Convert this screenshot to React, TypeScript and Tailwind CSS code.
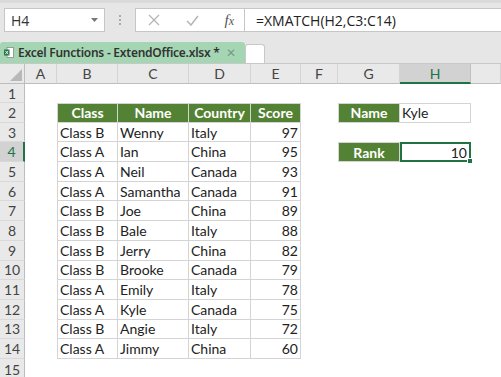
import React from "react";

const rows = [
  ["Class B", "Wenny", "Italy", 97],
  ["Class A", "Ian", "China", 95],
  ["Class A", "Neil", "Canada", 93],
  ["Class A", "Samantha", "Canada", 91],
  ["Class B", "Joe", "China", 89],
  ["Class B", "Bale", "Italy", 88],
  ["Class B", "Jerry", "China", 82],
  ["Class B", "Brooke", "Canada", 79],
  ["Class A", "Emily", "Italy", 78],
  ["Class A", "Kyle", "Canada", 75],
  ["Class B", "Angie", "Italy", 72],
  ["Class A", "Jimmy", "China", 60],
];

const cols = ["A", "B", "C", "D", "E", "F", "G", "H", ""];

function RowHead({ n, active }: { n: number; active?: boolean }) {
  return (
    <div
      className={`flex items-center justify-center border-b border-[#d9d9d9] text-[14px] ${
        active
          ? "bg-[#d2d2d2] text-[#217346] border-r-2 border-r-[#217346]"
          : "bg-[#e9e9e9] text-[#444] border-r border-r-[#bdbdbd]"
      }`}
    >
      {n}
    </div>
  );
}

function Empty({ span = 1 }: { span?: number }) {
  return <div style={{ gridColumn: `span ${span}` }} />;
}

const tCell = "flex items-center border-r border-b border-[#d4d4d4] px-[2px] text-[14px] text-[#222]";
const gCell = "flex items-center justify-center bg-[#548235] border-r border-b border-[#d4d4d4] text-[14px] font-bold text-white";

export default function App() {
  return (
    <div
      className="w-[501px] h-[377px] overflow-hidden bg-white"
      style={{ fontFamily: "Lato, 'Open Sans', sans-serif" }}
    >
      {/* formula bar */}
      <div className="h-[43px] bg-[#e6e6e6] border-t-[3px] border-[#dadada] flex items-start pt-[5px] pl-[4px]">
        <div className="w-[101px] h-[24px] bg-white border border-[#c6c6c6] flex items-center justify-between pl-[6px] pr-[6px]">
          <span className="text-[14px] text-[#333]" style={{ fontFamily: "'Open Sans', sans-serif" }}>H4</span>
          <svg width="7" height="4" viewBox="0 0 7 4"><path d="M0 0h7L3.5 4z" fill="#777" /></svg>
        </div>
        <div className="w-[30px] h-[24px] flex flex-col items-center justify-center gap-[2px]">
          <span className="w-[2px] h-[2px] bg-[#aaa]" />
          <span className="w-[2px] h-[2px] bg-[#aaa]" />
          <span className="w-[2px] h-[2px] bg-[#aaa]" />
        </div>
        <div className="w-[110px] h-[24px] bg-white border border-[#c6c6c6] flex items-center justify-between pl-[12px] pr-[10px]">
          <svg width="12" height="12" viewBox="0 0 12 12"><path d="M1 1l10 10M11 1L1 11" stroke="#b5b5b5" strokeWidth="1.3" /></svg>
          <svg width="13" height="11" viewBox="0 0 13 11"><path d="M1 6l4 4L12 1" stroke="#b5b5b5" strokeWidth="1.5" fill="none" /></svg>
          <span className="text-[15px] italic text-[#555]" style={{ fontFamily: "'Liberation Serif', serif" }}>
            f<span className="text-[12px]">x</span>
          </span>
        </div>
        <div className="flex-1 h-[24px] bg-white border-y border-[#c6c6c6] flex items-center pl-[11px]">
          <span className="text-[14px] text-[#222]" style={{ fontFamily: "'Open Sans', sans-serif" }}>=XMATCH(H2,C3:C14)</span>
        </div>
      </div>

      {/* tab row */}
      <div className="h-[21px] bg-[#e6e6e6] flex items-end border-b border-[#c8c8c8]">
        <div className="w-[245px] h-[21px] bg-[#a5d6b4] rounded-t-[3px] flex items-center pl-[4px] pr-[9px]">
          <svg width="10" height="11" viewBox="0 0 10 11" className="mr-[4px] shrink-0">
            <rect x="3" y="0.5" width="6.5" height="10" fill="#fff" stroke="#888" strokeWidth="0.8" />
            <rect x="0" y="2.5" width="5.5" height="6" fill="#217346" />
            <path d="M1.3 3.8l2.9 3.4M4.2 3.8L1.3 7.2" stroke="#fff" strokeWidth="0.9" />
          </svg>
          <span className="whitespace-nowrap text-[12px] font-semibold text-[#333] tracking-[-0.25px]" style={{ fontFamily: "'Noto Sans', sans-serif" }}>
            Excel Functions - ExtendOffice.xlsx *
          </span>
          <span className="ml-auto text-[12px] text-[#7a9a85]">✕</span>
        </div>
        <div className="w-[20px] h-[19px] bg-white border border-b-0 border-[#c8c8c8] rounded-t-[3px]" />
      </div>

      {/* sheet */}
      <div className="grid grid-cols-[25px_32px_61px_71px_62px_50px_37px_62px_71px_1fr] grid-rows-[20px_19px_repeat(13,19.7px)_1fr] h-[313px]">
        {/* column headers */}
        <div className="bg-[#e9e9e9] border-r border-b border-[#bdbdbd] flex items-end justify-end p-[2px]">
          <svg width="12" height="12" viewBox="0 0 12 12"><path d="M12 0v12H0z" fill="#b8b8b8" /></svg>
        </div>
        {cols.map((c, i) =>
          c === "H" ? (
            <div key={i} className="bg-[#d2d2d2] border-r border-[#c0c0c0] border-b-2 border-b-[#217346] flex items-center justify-center text-[14px] text-[#217346]">
              {c}
            </div>
          ) : (
            <div key={i} className="bg-[#e9e9e9] border-r border-[#d4d4d4] border-b border-b-[#bdbdbd] flex items-center justify-center text-[14px] text-[#444]">
              {c}
            </div>
          )
        )}

        {/* row 1 */}
        <RowHead n={1} />
        <Empty span={9} />

        {/* row 2 */}
        <RowHead n={2} />
        <Empty />
        <div className={`${gCell} border-l border-t`}>Class</div>
        <div className={`${gCell} border-t`}>Name</div>
        <div className={`${gCell} border-t`}>Country</div>
        <div className={`${gCell} border-t`}>Score</div>
        <Empty />
        <div className={`${gCell} border-l border-t`}>Name</div>
        <div className={`${tCell} border-t`}>Kyle</div>
        <Empty />

        {rows.map((r, i) => {
          const n = i + 3;
          return (
            <React.Fragment key={n}>
              <RowHead n={n} active={n === 4} />
              <Empty />
              <div className={`${tCell} border-l`}>{r[0]}</div>
              <div className={tCell}>{r[1]}</div>
              <div className={tCell}>{r[2]}</div>
              <div className={`${tCell} justify-end`}>{r[3]}</div>
              {n === 4 ? (
                <>
                  <Empty />
                  <div className={`${gCell} border-l border-t`}>Rank</div>
                  <div className="relative flex items-center justify-end border-2 border-[#217346] pr-[2px] text-[14px] text-[#222]">
                    10
                    <span className="absolute -right-[4px] -bottom-[4px] w-[6px] h-[6px] bg-[#217346] border border-white" />
                  </div>
                  <Empty />
                </>
              ) : (
                <Empty span={4} />
              )}
            </React.Fragment>
          );
        })}

        <RowHead n={15} />
        <Empty span={9} />
        <div className="bg-[#e9e9e9] border-r border-[#bdbdbd]" />
        <Empty span={9} />
      </div>
    </div>
  );
}
